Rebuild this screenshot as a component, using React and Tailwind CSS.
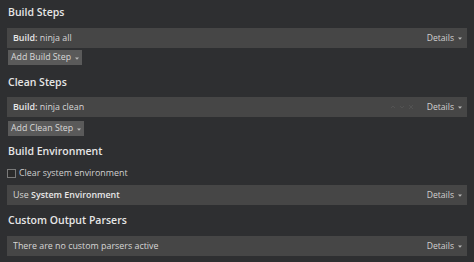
import React from "react";

const Caret = () => (
  <svg width="4" height="3" viewBox="0 0 4 3" className="ml-[4px] mt-[1px]">
    <path d="M0 0.5h4L2 2.8z" fill="#b8b8b8" />
  </svg>
);

const Heading = ({ children, h }) => (
  <div className={`${h} flex items-center pl-2`}>
    <h2 className="text-[10.5px] font-semibold text-[#e6e6e6] leading-none">{children}</h2>
  </div>
);

const DetailsRow = ({ children, arrows }) => (
  <div className="mx-[7px] h-[20px] bg-[#464646] flex items-center pl-[6px] pr-[5px] text-[8.9px] text-[#d6d6d6]">
    <div className="flex-1 truncate">{children}</div>
    {arrows && (
      <div className="flex items-center gap-[3px] mr-[13px]">
        <svg width="6" height="6" viewBox="0 0 6 6">
          <path d="M1 4l2-2 2 2" stroke="#525252" fill="none" />
        </svg>
        <svg width="6" height="6" viewBox="0 0 6 6">
          <path d="M1 2l2 2 2-2" stroke="#525252" fill="none" />
        </svg>
        <svg width="6" height="6" viewBox="0 0 6 6">
          <path d="M1 1l4 4M5 1l-4 4" stroke="#525252" fill="none" />
        </svg>
      </div>
    )}
    <div className="flex items-center text-[8.6px] text-[#d0d0d0]">
      Details
      <Caret />
    </div>
  </div>
);

const AddButton = ({ children }) => (
  <div className="ml-2 h-[15px] w-fit bg-[#5a5a5a] flex items-center pl-[3px] pr-[3px] text-[8.8px] text-[#d8d8d8]">
    {children}
    <Caret />
  </div>
);

export default function App() {
  return (
    <div
      className="w-[474px] h-[262px] bg-[#2e2f31] overflow-hidden"
      style={{ fontFamily: '"Open Sans", "Liberation Sans", sans-serif' }}
    >
      <Heading h="h-[24px]">Build Steps</Heading>
      <div className="mt-[4px]">
        <DetailsRow>
          <span className="font-semibold text-[#e8e8e8]">Build:</span> ninja all
        </DetailsRow>
      </div>
      <div className="mt-[2px]">
        <AddButton>Add Build Step</AddButton>
      </div>

      <div className="mt-[2px]">
        <Heading h="h-[30px]">Clean Steps</Heading>
      </div>
      <DetailsRow arrows>
        <span className="font-semibold text-[#e8e8e8]">Build:</span> ninja clean
      </DetailsRow>
      <div className="mt-[4px]">
        <AddButton>Add Clean Step</AddButton>
      </div>

      <Heading h="h-[30px]">Build Environment</Heading>
      <label className="h-[15px] pl-[7px] flex items-center gap-[3px] text-[8.9px] text-[#d0d0d0] leading-none">
        <span className="w-[9px] h-[9px] border border-[#7a7a7a] bg-[#2a2a2a]" />
        Clear system environment
      </label>
      <div className="mt-[4px]">
        <DetailsRow>
          Use <span className="font-semibold text-[#e8e8e8]">System Environment</span>
        </DetailsRow>
      </div>

      <Heading h="h-[31px]">Custom Output Parsers</Heading>
      <DetailsRow>There are no custom parsers active</DetailsRow>
    </div>
  );
}
